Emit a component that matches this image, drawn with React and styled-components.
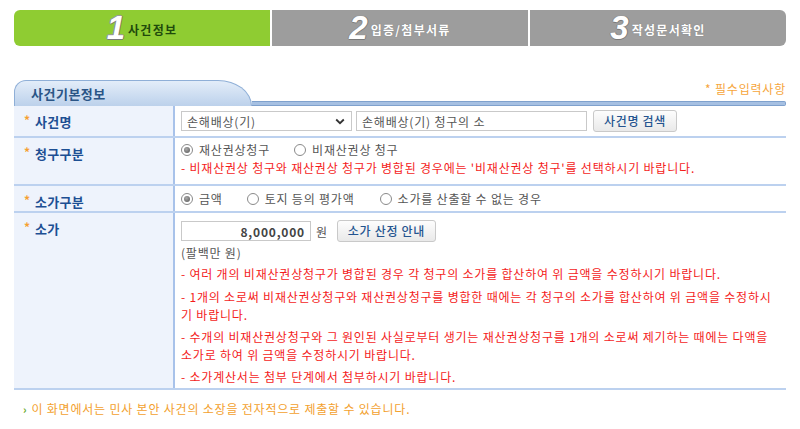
import React from 'react';
import styled, { createGlobalStyle } from 'styled-components';

const GlobalStyle = createGlobalStyle`
  body {
    margin: 0;
    background: #fff;
    font-family: "Noto Sans CJK KR", "Noto Sans", sans-serif;
    font-size: 12px;
    letter-spacing: 0.8px;
    color: #555;
  }
`;

const Page = styled.div`
  width: 772px;
  padding: 10px 14px 0 14px;
`;

const Steps = styled.div`
  display: flex;
  gap: 2px;
  height: 36px;
`;

const Step = styled.div`
  flex: 1;
  display: flex;
  align-items: center;
  justify-content: center;
  background: ${props => props.active ? '#8fcc32' : '#9d9d9d'};
  &:first-child { border-radius: 6px 0 0 6px; }
  &:last-child { border-radius: 0 6px 6px 0; }
`;

const StepNum = styled.span`
  font-family: "Liberation Sans", Arial, sans-serif;
  font-style: italic;
  font-weight: bold;
  font-size: 33px;
  line-height: 36px;
  letter-spacing: 0;
  color: #fff;
  text-shadow: 1px 0 0 #7a7a7a, -1px 0 0 #8a8a8a, 0 1px 0 #7a7a7a, 0 -1px 0 #9a9a9a;
  margin-right: 3px;
`;

const StepLabel = styled.span`
  font-weight: bold;
  font-size: 12px;
  letter-spacing: 1.3px;
  margin-top: 3px;
  color: ${props => props.active ? '#1f4a0c' : '#fff'};
  text-shadow: ${props => props.active ? 'none' : '0 0 1px #777'};
`;

const SectionHead = styled.div`
  display: flex;
  align-items: flex-end;
  margin-top: 32px;
  height: 28px;
`;

const HeadTab = styled.div`
  width: 238px;
  height: 26px;
  box-sizing: border-box;
  padding-left: 16px;
  display: flex;
  align-items: center;
  background: linear-gradient(#e3edf9, #bcd1eb);
  border: 1px solid #8fafd7;
  border-bottom: none;
  border-radius: 12px 34px 0 0 / 12px 26px 0 0;
  font-weight: bold;
  font-size: 13px;
  letter-spacing: 0.5px;
  color: #2a5586;
`;

const HeadRest = styled.div`
  flex: 1;
  display: flex;
  flex-direction: column;
  align-items: flex-end;
`;

const Required = styled.div`
  color: #f6a53b;
  font-size: 12px;
  line-height: 16px;
  margin-bottom: 4px;
`;

const HeadBar = styled.div`
  align-self: stretch;
  height: 3px;
  background: #a6c0e2;
  border-top: 1px solid #7fa1cd;
  border-bottom: 1px solid #7fa1cd;
  border-right: 1px solid #7fa1cd;
  border-radius: 0 2px 2px 0;
`;

const Row = styled.div`
  display: grid;
  grid-template-columns: 161px 1fr;
  box-sizing: border-box;
  min-height: ${props => props.h}px;
  border-bottom: 2px solid #bcd1ef;
`;

const LabelCell = styled.div`
  display: flex;
  align-items: flex-start;
  padding: 7px 0 0 10px;
  background: #eef3fc;
  border-right: 2px solid #a8c2ea;
  line-height: 18px;
`;

const Star = styled.span`
  color: #f5a030;
  font-size: 12px;
  font-weight: bold;
  width: 11px;
  margin-top: -2px;
`;

const Label = styled.span`
  font-weight: bold;
  font-size: 13px;
  letter-spacing: 0.3px;
  color: #1d4f93;
`;

const Cell = styled.div`
  padding: ${props => props.pad || '0 6px'};
  display: flex;
  flex-direction: column;
  justify-content: ${props => props.center ? 'center' : 'flex-start'};
  line-height: 19px;
`;

const Line = styled.div`
  display: flex;
  align-items: center;
  height: ${props => props.h || 19}px;
  gap: ${props => props.gap || 0}px;
`;

const SelectBox = styled.div`
  width: 171px;
  height: 20px;
  box-sizing: border-box;
  border: 1px solid #c9c9c9;
  display: flex;
  align-items: center;
  justify-content: space-between;
  padding: 0 6px 0 5px;
  color: #555;
  background: #fff;
`;

const TextBox = styled.div`
  width: ${props => props.w}px;
  height: 20px;
  box-sizing: border-box;
  border: 1px solid #c9c9c9;
  display: flex;
  align-items: center;
  justify-content: ${props => props.right ? 'flex-end' : 'flex-start'};
  padding: 0 5px;
  color: ${props => props.right ? '#444' : '#555'};
  font-weight: ${props => props.right ? 'bold' : 'normal'};
  background: #fff;
`;

const Button = styled.button`
  height: 22px;
  padding: 0 10px;
  border: 1px solid #c9c9c9;
  border-radius: 3px;
  background: linear-gradient(#fdfdfd, #e9e9e9);
  color: #24548f;
  font-family: "Noto Sans CJK KR", sans-serif;
  font-size: 12px;
  letter-spacing: 0.7px;
  font-weight: 500;
  line-height: 20px;
`;

const RadioItem = styled.label`
  display: inline-flex;
  align-items: center;
  gap: 6px;
  color: #555;
  margin-right: ${props => props.mr || 0}px;
`;

const RadioMark = styled.span`
  width: 12px;
  height: 12px;
  box-sizing: border-box;
  border-radius: 50%;
  border: 1px solid #8a8a8a;
  background: #fff;
  display: inline-flex;
  align-items: center;
  justify-content: center;
  &::after {
    content: '';
    width: 6px;
    height: 6px;
    border-radius: 50%;
    background: ${props => props.checked ? 'radial-gradient(circle at 40% 35%, #aaa, #555)' : 'transparent'};
  }
`;

const Note = styled.p`
  margin: ${props => props.mt ?? 3}px 0 0 0;
  color: #f41c1c;
  line-height: 18.5px;
`;

const Plain = styled.div`
  color: #555;
  line-height: 18px;
  margin-top: 2px;
`;

const Footer = styled.div`
  padding: 10px 0 0 9px;
  color: #f3a12e;
  line-height: 18px;
  display: flex;
  align-items: center;
  gap: 4px;
`;

const Arrow = styled.span`
  color: #5fa823;
  font-weight: bold;
  font-size: 11px;
`;

const Radio = ({ checked, children, mr }) => (
  <RadioItem mr={mr}>
    <RadioMark checked={checked} />
    {children}
  </RadioItem>
);

const Chevron = () => (
  <svg width="10" height="7" viewBox="0 0 10 7">
    <path d="M1.2 1.5 L5 5.2 L8.8 1.5" stroke="#333" strokeWidth="1.8" fill="none" />
  </svg>
);

export default function App() {
  return (
    <Page>
      <GlobalStyle />
      <Steps>
        <Step active>
          <StepNum>1</StepNum>
          <StepLabel active>사건정보</StepLabel>
        </Step>
        <Step>
          <StepNum>2</StepNum>
          <StepLabel>입증/첨부서류</StepLabel>
        </Step>
        <Step>
          <StepNum>3</StepNum>
          <StepLabel>작성문서확인</StepLabel>
        </Step>
      </Steps>

      <SectionHead>
        <HeadTab>사건기본정보</HeadTab>
        <HeadRest>
          <Required>* 필수입력사항</Required>
          <HeadBar />
        </HeadRest>
      </SectionHead>

      <Row h={32}>
        <LabelCell><Star>*</Star><Label>사건명</Label></LabelCell>
        <Cell center>
          <Line h={22}>
            <SelectBox>손해배상(기)<Chevron /></SelectBox>
            <TextBox w={231} style={{ marginLeft: 4 }}>손해배상(기) 청구의 소</TextBox>
            <Button style={{ marginLeft: 6 }}>사건명 검색</Button>
          </Line>
        </Cell>
      </Row>

      <Row h={48}>
        <LabelCell><Star>*</Star><Label>청구구분</Label></LabelCell>
        <Cell pad="2px 6px 6px 6px">
          <Line>
            <Radio checked mr={24}>재산권상청구</Radio>
            <Radio>비재산권상 청구</Radio>
          </Line>
          <Note mt={0}>- 비재산권상 청구와 재산권상 청구가 병합된 경우에는 '비재산권상 청구'를 선택하시기 바랍니다.</Note>
        </Cell>
      </Row>

      <Row h={26}>
        <LabelCell><Star>*</Star><Label>소가구분</Label></LabelCell>
        <Cell center>
          <Line>
            <Radio checked mr={24}>금액</Radio>
            <Radio mr={25}>토지 등의 평가액</Radio>
            <Radio>소가를 산출할 수 없는 경우</Radio>
          </Line>
        </Cell>
      </Row>

      <Row h={177}>
        <LabelCell><Star>*</Star><Label>소가</Label></LabelCell>
        <Cell pad="7px 9px 2px 6px">
          <Line gap={5} h={22}>
            <TextBox w={130} right>8,000,000</TextBox>
            <span>원</span>
            <Button style={{ marginLeft: 4 }}>소가 산정 안내</Button>
          </Line>
          <Plain>(팔백만 원)</Plain>
          <Note>- 여러 개의 비재산권상청구가 병합된 경우 각 청구의 소가를 합산하여 위 금액을 수정하시기 바랍니다.</Note>
          <Note mt={4}>- 1개의 소로써 비재산권상청구와 재산권상청구를 병합한 때에는 각 청구의 소가를 합산하여 위 금액을 수정하시기 바랍니다.</Note>
          <Note>- 수개의 비재산권상청구와 그 원인된 사실로부터 생기는 재산권상청구를 1개의 소로써 제기하는 때에는 다액을 소가로 하여 위 금액을 수정하시기 바랍니다.</Note>
          <Note>- 소가계산서는 첨부 단계에서 첨부하시기 바랍니다.</Note>
        </Cell>
      </Row>

      <Footer>
        <Arrow>›</Arrow>
        이 화면에서는 민사 본안 사건의 소장을 전자적으로 제출할 수 있습니다.
      </Footer>
    </Page>
  );
}
